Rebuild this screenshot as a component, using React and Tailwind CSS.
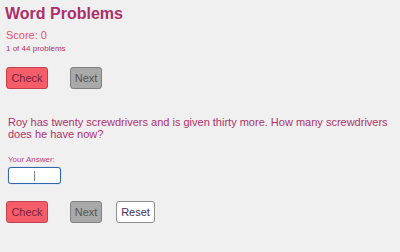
import React from 'react';

const App = () => {
    return (
        <div className="min-h-[252px] w-[400px] bg-[#f0f0f0] font-['Liberation_Sans',Arial,sans-serif] px-[6px] pt-[6px]">
            <h1 className="-ml-[1px] text-[16px] font-bold text-[#ad2f68] leading-[16px]">Word Problems</h1>
            <p className="mt-[8px] text-[11px] leading-[11px] text-[#e8506a]">Score: 0</p>
            <p className="mt-[4px] text-[8px] leading-[8px] text-[#b0306a]">1 of 44 problems</p>

            <div className="mt-[14px] flex items-center">
                <button className="w-[42px] h-[22px] rounded-[3px] border border-[#c04050] bg-[#f55d69] text-[11px] text-[#7a2040]">Check</button>
                <button className="ml-[22px] w-[32px] h-[22px] rounded-[3px] border border-[#808080] bg-[#a9a9a9] text-[11px] text-[#555]">Next</button>
            </div>

            <p className="mt-[27px] pl-[2px] text-[11px] leading-[12px] text-[#b0306a]">
                Roy has twenty screwdrivers and is given thirty more. How many screwdrivers does he have now?
            </p>

            <p className="mt-[16px] pl-[2px] text-[8px] leading-[8px] text-[#c04080]">Your Answer:</p>
            <div className="mt-[3px] ml-[2px] w-[53px] h-[17px] rounded-[3px] border-[1.5px] border-[#3466ac] bg-white shadow-[0_0_1px_#6a9ad8] flex items-center justify-center">
                <span className="block w-px h-[10px] bg-[#888]"></span>
            </div>

            <div className="mt-[17px] flex items-center">
                <button className="w-[42px] h-[22px] rounded-[3px] border border-[#c04050] bg-[#f55d69] text-[11px] text-[#7a2040]">Check</button>
                <button className="ml-[22px] w-[32px] h-[22px] rounded-[3px] border border-[#808080] bg-[#a9a9a9] text-[11px] text-[#555]">Next</button>
                <button className="ml-[14px] w-[39px] h-[22px] rounded-[3px] border border-[#909090] bg-white text-[11px] text-[#4a3060]">Reset</button>
            </div>
        </div>
    );
};

export default App;
